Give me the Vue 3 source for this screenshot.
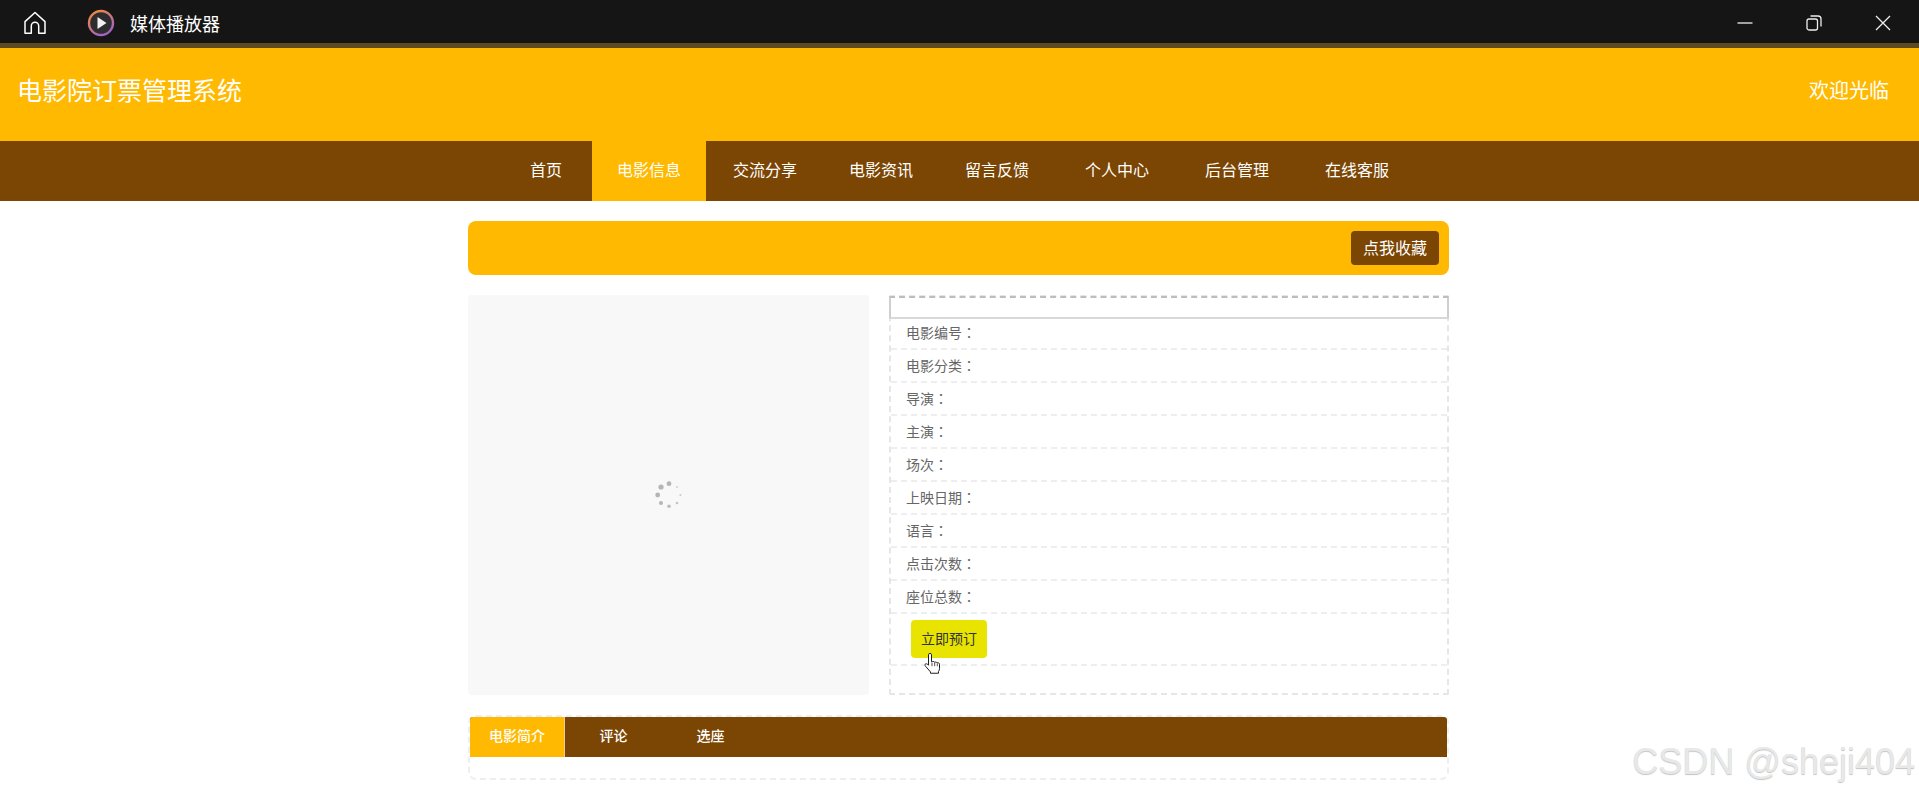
<template>
    <div class="page">
        <div class="titlebar">
            <div class="titlebar-left">
                <svg class="home-icon" width="24" height="24" viewBox="0 0 24 24" fill="none" stroke="#fff" stroke-width="1.5" stroke-linejoin="round">
                    <path d="M2 22.3V10.6L12 1.5l10 9.1v11.7h-6.3v-7.4a3.7 3.7 0 0 0-7.4 0v7.4z" />
                </svg>
                <svg class="player-icon" width="28" height="28" viewBox="0 0 28 28">
                    <defs>
                        <linearGradient id="ringGrad" x1="0.2" y1="0" x2="0.8" y2="1">
                            <stop offset="0" stop-color="#f28a3c" />
                            <stop offset="1" stop-color="#9a5fd0" />
                        </linearGradient>
                    </defs>
                    <circle cx="14" cy="14" r="12" fill="#2d2d2f" stroke="url(#ringGrad)" stroke-width="2.4" />
                    <path d="M10.5 8l9 6-9 6z" fill="#f2f2f2" />
                </svg>
                <span class="app-name">媒体播放器</span>
            </div>
            <div class="window-controls">
                <svg width="16" height="16" viewBox="0 0 16 16" stroke="#eee" stroke-width="1.3" fill="none"><path d="M0.5 8h15" /></svg>
                <svg width="16" height="16" viewBox="0 0 16 16" stroke="#eee" stroke-width="1.3" fill="none">
                    <rect x="1" y="4" width="10.5" height="11" rx="2" />
                    <path d="M4.5 1h7.5a3 3 0 0 1 3 3v7.5" />
                </svg>
                <svg width="16" height="16" viewBox="0 0 16 16" stroke="#eee" stroke-width="1.3" fill="none"><path d="M1 1l14 14M15 1L1 15" /></svg>
            </div>
        </div>
        <div class="strip"></div>

        <header class="header">
            <h1 class="site-title">电影院订票管理系统</h1>
            <span class="welcome">欢迎光临</span>
        </header>

        <nav class="nav">
            <a
                v-for="item in navItems"
                :key="item.name"
                class="nav-item"
                :class="{ active: item.active, spaced: item.spaced }"
            >{{ item.name }}</a>
        </nav>

        <main class="container">
            <div class="fav-bar">
                <button class="fav-btn">点我收藏</button>
            </div>

            <section class="detail">
                <div class="gallery">
                    <svg width="32" height="32" viewBox="-16 -16 32 32" fill="#b5b5b8">
                        <circle
                            v-for="dot in spinnerDots"
                            :key="dot.x"
                            :cx="dot.x"
                            :cy="dot.y"
                            :r="dot.r"
                            :opacity="dot.o"
                        />
                    </svg>
                </div>
                <div class="info">
                    <div class="name-box"></div>
                    <div class="info-row" v-for="label in fields" :key="label">{{ label }}<span class="colon">：</span></div>
                    <div class="action-row">
                        <button class="book-btn">
                            立即预订
                            <svg class="hand" width="17" height="22" viewBox="0 0 17 25" preserveAspectRatio="none" fill="#fff" stroke="#111" stroke-width="1" stroke-linejoin="round">
                                <path d="M4.5 2a1.5 1.5 0 0 1 3 0v8l1.2-.4c.8-.2 1.5.2 1.6.8l1.2-.1c.8-.1 1.3.3 1.4.9l1-.1c.9 0 1.6.6 1.6 1.6v5c0 1.5-.5 2.5-1 3.3v2H6.5v-1.5L1.5 15c-.8-1-.7-2 0-2.5s1.6-.2 2.3.6l.7.8z" />
                                <path d="M8 11v4M10.7 11v4M13.3 12v3" fill="none" stroke-width="0.8" />
                            </svg>
                        </button>
                    </div>
                </div>
            </section>

            <section class="tabs">
                <div class="tab-head">
                    <div
                        v-for="tab in tabs"
                        :key="tab.name"
                        class="tab"
                        :class="{ current: tab.current }"
                    >{{ tab.name }}</div>
                </div>
                <div class="tab-body"></div>
            </section>
        </main>

        <div class="watermark">CSDN @sheji404</div>
    </div>
</template>

<script setup>
const navItems = [
    { name: '首页' },
    { name: '电影信息', active: true },
    { name: '交流分享' },
    { name: '电影资讯' },
    { name: '留言反馈' },
    { name: '个人中心', spaced: true },
    { name: '后台管理', spaced: true },
    { name: '在线客服', spaced: true }
];

const fields = ['电影编号', '电影分类', '导演', '主演', '场次', '上映日期', '语言', '点击次数', '座位总数'];

const tabs = [
    { name: '电影简介', current: true },
    { name: '评论' },
    { name: '选座' }
];

// 8 dots round the ring, fading clockwise from the top
const spinnerDots = [
    { r: 2.4, o: 1 },
    { r: 1, o: 0.6 },
    { r: 1, o: 0.7 },
    { r: 1.3, o: 0.8 },
    { r: 1.8, o: 0.9 },
    { r: 2, o: 1 },
    { r: 2.4, o: 1 },
    { r: 2.6, o: 1 }
].map((dot, i) => {
    const angle = (i * Math.PI) / 4;
    return {
        ...dot,
        x: +(Math.sin(angle) * 11.3).toFixed(2),
        y: +(-Math.cos(angle) * 11.3).toFixed(2)
    };
});
</script>

<style>
html, body {
    margin: 0;
    background: #fff;
    overflow: hidden;
}
</style>

<style scoped>
.page {
    position: relative;
    height: 796px;
    overflow: hidden;
    font-family: "Noto Sans CJK SC", "Liberation Sans", sans-serif;
}

.titlebar {
    height: 43px;
    box-sizing: border-box;
    padding-top: 3px;
    background: #151515;
    display: flex;
    justify-content: space-between;
    align-items: center;
}
.titlebar-left {
    display: flex;
    align-items: center;
    padding-left: 23px;
}
.player-icon {
    margin-left: 40px;
}
.app-name {
    margin-left: 15px;
    color: #fff;
    font-size: 18px;
}
.window-controls {
    display: flex;
    gap: 53px;
    padding-right: 28px;
}
.strip {
    height: 5px;
    background: #5e4a1c;
}

.header {
    height: 93px;
    background: #ffb900;
    display: flex;
    justify-content: space-between;
    align-items: center;
    padding: 0 30px 11px 17px;
    box-sizing: border-box;
    color: #fff;
}
.site-title {
    margin: 0;
    font-size: 25px;
    font-weight: 400;
}
.welcome {
    font-size: 20px;
}

.nav {
    height: 60px;
    background: #7b4503;
    display: flex;
    justify-content: center;
    gap: 4px;
}
.nav-item {
    padding: 0 24px;
    line-height: 56px;
    color: #fff;
    font-size: 16px;
}
.nav-item.spaced {
    margin-left: 4px;
}
.nav-item.active {
    margin: 0 -1px 0 2px;
    padding: 0 25px;
    background: #ffb900;
}

.container {
    width: 981px;
    margin: 20px 0 0 468px;
}

.fav-bar {
    height: 54px;
    background: #ffb900;
    border-radius: 8px;
    display: flex;
    justify-content: flex-end;
    align-items: center;
    padding-right: 10px;
}
.fav-btn {
    width: 88px;
    height: 34px;
    border: 0;
    padding: 0 0 2px;
    border-radius: 4px;
    background: #7b4503;
    color: #fff;
    font: 16px "Noto Sans CJK SC", sans-serif;
}

.detail {
    display: flex;
    gap: 20px;
    margin-top: 20px;
}
.gallery {
    width: 401px;
    height: 400px;
    background: #f8f8f8;
    border-radius: 4px;
    display: flex;
    align-items: center;
    justify-content: center;
}
.info {
    flex: 1;
    height: 400px;
    box-sizing: border-box;
    border: 2px dashed #e6e6e6;
    border-radius: 2px;
}
.name-box {
    height: 23px;
    margin: -1px -2px -2px;
    position: relative;
    background: #fff;
    border-top: 2px dashed #bdbdbd;
    border-left: 2px solid #cfcfcf;
    border-right: 2px solid #cfcfcf;
    border-bottom: 2px solid #d8d8d8;
    box-sizing: border-box;
}
.info-row {
    height: 33px;
    line-height: 30px;
    box-sizing: border-box;
    padding-left: 15px;
    border-bottom: 2px dashed #eeeeee;
    font-size: 14px;
    color: #666;
}
.colon {
    font-family: "Noto Sans CJK TC", sans-serif;
}
.action-row {
    height: 52px;
    padding: 6px 0 0 20px;
    box-sizing: border-box;
    border-bottom: 2px dashed #eeeeee;
}
.book-btn {
    position: relative;
    width: 76px;
    height: 38px;
    border: 0;
    padding: 0 0 3px;
    border-radius: 4px;
    background: #e8e400;
    color: #333;
    font: 14px "Noto Sans CJK SC", sans-serif;
}
.hand {
    position: absolute;
    left: 13px;
    top: 33px;
}

.tabs {
    margin-top: 20px;
    height: 65px;
    box-sizing: border-box;
    border: 2px dashed #eeeeee;
    border-radius: 8px;
}
.tab-head {
    display: flex;
    height: 40px;
    background: #7b4503;
    border-radius: 3px 3px 0 0;
    overflow: hidden;
}
.tab {
    width: 97px;
    line-height: 37px;
    text-align: center;
    color: #fff;
    font-size: 14px;
    font-weight: 500;
}
.tab.current {
    width: 94px;
    background: #ffb900;
    border-right: 1px solid #e8c9a0;
}

.watermark {
    position: absolute;
    right: 4px;
    top: 739px;
    font-family: "Liberation Sans", sans-serif;
    font-size: 36px;
    line-height: 46px;
    color: #e8e8e8;
    text-shadow: 0 1px 1px #c4c4c4;
}
</style>
